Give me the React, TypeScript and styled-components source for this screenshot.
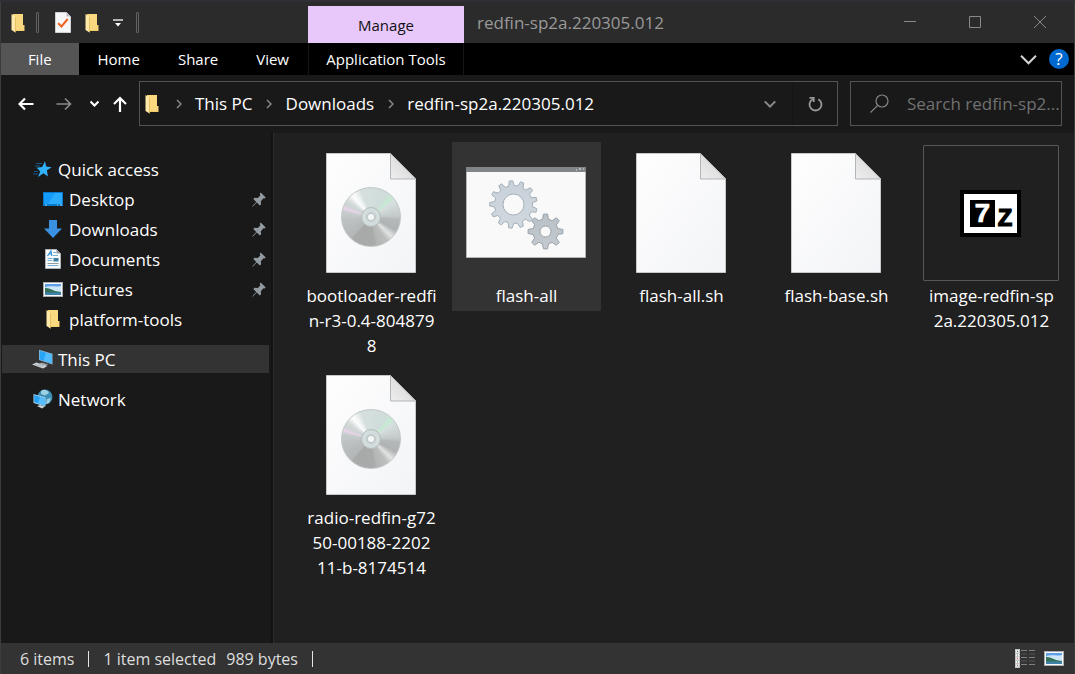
import React from 'react';
import styled, { createGlobalStyle } from 'styled-components';

const GlobalStyle = createGlobalStyle`
  *, *::before, *::after { box-sizing: border-box; }
  body {
    margin: 0;
    background: #191919;
    color: #fff;
    font-family: 'Open Sans', 'Noto Sans', sans-serif;
    font-size: 17px;
    line-height: 24px;
    font-variant-ligatures: none;
  }
  button, input { font: inherit; color: inherit; margin: 0; padding: 0; border: 0; background: none; }
  ul { list-style: none; margin: 0; padding: 0; }
  svg { display: block; flex: none; }
`;

const Window = styled.div`
  display: flex;
  flex-direction: column;
  min-height: 100vh;
  border: 1px solid #3d3d3f;
  border-top: 2px solid #2f2f35;
  border-bottom: 0;
`;

const TitleBar = styled.header`
  display: flex;
  height: 41px;
  padding-right: 2px;
  background: #2b2b2b;
`;

const QuickBar = styled.div`
  display: flex;
  align-items: center;
  width: 307px;
  padding-left: 10px;
`;

const QuickButton = styled.button<{ $width: number }>`
  display: flex;
  align-items: center;
  justify-content: center;
  width: ${(p) => p.$width}px;
  height: 24px;
`;

const Grip = styled.span<{ $before?: number; $after?: number }>`
  width: 3px;
  height: 21px;
  margin: 0 ${(p) => p.$after ?? 0}px 0 ${(p) => p.$before ?? 0}px;
  border: 1px solid #626262;
  border-radius: 1px;
`;

const ContextLabel = styled.div`
  display: flex;
  align-items: center;
  justify-content: center;
  width: 156px;
  margin-top: 4px;
  padding-top: 1px;
  background: #e8c8fa;
  color: #111;
  font-size: 15px;
`;

const WindowTitle = styled.h1`
  flex: 1;
  margin: 0;
  padding: 9px 0 0 13px;
  color: #999;
  font-size: 17px;
  font-weight: 400;
`;

const CaptionButton = styled.button`
  display: flex;
  align-items: center;
  justify-content: center;
  width: 65px;
  padding-bottom: 2px;
`;

const Ribbon = styled.nav`
  display: flex;
  height: 32px;
  background: #000;
`;

const RibbonTabs = styled.div`
  display: flex;
  width: 307px;
`;

const Tab = styled.button<{ $file?: boolean; $tool?: boolean }>`
  width: ${(p) => (p.$tool ? '156px' : p.$file ? '78px' : 'auto')};
  padding: 0 ${(p) => (p.$tool || p.$file ? 0 : 19)}px 1px;
  font-size: 15px;
  background: ${(p) => (p.$file ? '#555' : 'transparent')};
  border: solid #151515;
  border-width: ${(p) => (p.$tool ? '0 1px' : '0')};
`;

const RibbonEnd = styled.div`
  display: flex;
  align-items: center;
  gap: 12px;
  margin-left: auto;
  padding-right: 5px;
`;

const HelpButton = styled.button`
  width: 20px;
  height: 20px;
  border-radius: 50%;
  background: #0069cf;
  font-size: 17px;
  line-height: 20px;
`;

const NavBar = styled.div`
  display: flex;
  height: 58px;
  padding: 6px 12px 7px 10px;
  background: #191919;
`;

const NavButton = styled.button<{ $width: number }>`
  display: flex;
  align-items: center;
  justify-content: center;
  width: ${(p) => p.$width}px;
`;

const NavButtons = styled.div`
  display: flex;
  width: 128px;
`;

const AddressBar = styled.div`
  display: flex;
  flex: 1;
  align-items: center;
  border: 1px solid #535353;
  padding-left: 5px;
`;

const Crumbs = styled.div`
  display: flex;
  flex: 1;
  align-items: center;
  padding-left: 3px;
  white-space: nowrap;
`;

const Crumb = styled.button`
  height: 28px;
`;

const CrumbArrow = styled.span`
  display: flex;
  justify-content: center;
  width: 33px;
`;

const AddressButton = styled.button`
  display: flex;
  align-items: center;
  justify-content: center;
  align-self: stretch;
  width: 45px;
  border-left: 1px solid #151515;
`;

const SearchBox = styled.label`
  display: flex;
  align-items: center;
  gap: 18px;
  width: 212px;
  margin-left: 12px;
  padding-left: 19px;
  border: 1px solid #535353;
`;

const SearchInput = styled.input`
  min-width: 0;
  flex: 1;
  outline: 0;
  &::placeholder { color: #717171; opacity: 1; }
`;

const Body = styled.div`
  display: flex;
  flex: 1;
`;

const Sidebar = styled.nav`
  width: 270px;
  padding: 22px 2px 0 1px;
`;

const Splitter = styled.div`
  width: 3px;
  border-left: 2px solid #121212;
  border-right: 1px solid #2c2c2c;
`;

const Place = styled.li<{ $nested?: boolean; $active?: boolean; $spaced?: boolean }>`
  display: flex;
  align-items: center;
  height: 28px;
  margin: ${(p) => (p.$spaced ? 12 : 2)}px 0 0;
  padding: 0 3px 0 ${(p) => (p.$nested ? 40 : 30)}px;
  background: ${(p) => (p.$active ? '#333' : 'transparent')};
  &:first-child { margin-top: 0; }
`;

const PlaceIcon = styled.span<{ $nested?: boolean }>`
  display: flex;
  justify-content: center;
  width: 21px;
  margin-right: ${(p) => (p.$nested ? 6 : 5)}px;
`;

const PlaceLink = styled.a`
  flex: 1;
  padding-top: 2px;
  color: #fff;
  text-decoration: none;
`;

const Files = styled.ul`
  display: grid;
  flex: 1;
  grid-template-columns: repeat(auto-fill, 149px);
  align-content: start;
  align-items: start;
  gap: 3px 6px;
  padding: 9px 0 0 23px;
  background: #202020;
`;

const FileItem = styled.li<{ $selected?: boolean }>`
  display: flex;
  flex-direction: column;
  align-items: center;
  gap: 2px;
  padding: 3px 0;
  background: ${(p) => (p.$selected ? '#333' : 'transparent')};
`;

const Thumb = styled.div<{ $framed?: boolean }>`
  display: grid;
  place-items: center;
  width: 136px;
  height: 136px;
  margin-right: 2px;
  border: 1px solid ${(p) => (p.$framed ? '#575757' : 'transparent')};
  border-radius: 1px;
  & > * { grid-area: 1 / 1; }
`;

const FileName = styled.span`
  line-height: 25px;
  text-align: center;
`;

const NameLine = styled.span`
  display: block;
`;

const Disc = styled.div`
  display: grid;
  place-items: center;
  width: 60px;
  height: 60px;
  margin-top: 8px;
  border: 1px solid #c3c7c7;
  border-radius: 50%;
  background: conic-gradient(
    #d3dedd 0deg, #cfdcda 34deg, #c5ead2 47deg, #d6dfde 56deg, #c3caca 88deg,
    #b4b8b8 96deg, #b0b3b3 118deg, #e2e4e4 133deg, #bcbebe 146deg, #b3b5b5 168deg,
    #a9abab 172deg, #a8aaaa 220deg, #b4b7b7 224deg, #bdc1c1 262deg, #c5cccc 280deg,
    #e9d3e9 287deg, #cdd4d4 296deg, #d5dada 306deg, #fbfcfc 318deg, #f5f7f7 325deg, #d3dedd 340deg
  );
`;

const Hub = styled.div`
  display: grid;
  place-items: center;
  width: 20px;
  height: 20px;
  border: 1px solid #b3bbbb;
  border-radius: 50%;
  background: #d4dddd;
  &::after {
    content: '';
    width: 10px;
    height: 10px;
    border: 2px solid #c1cbcb;
    border-radius: 50%;
    background: #f6f8f8;
  }
`;

const StatusBar = styled.footer`
  display: flex;
  align-items: center;
  height: 31px;
  padding: 0 10px 0 19px;
  background: #333;
  color: #dedede;
  font-size: 16px;
`;

const StatusRule = styled.span`
  width: 1px;
  height: 16px;
  margin: 0 14px;
  background: #e5e5e5;
`;

const StatusText = styled.span<{ $gap?: boolean }>`
  margin-right: ${(p) => (p.$gap ? 10 : 0)}px;
`;

const Views = styled.div`
  display: flex;
  gap: 9px;
  margin-left: auto;
`;

const ViewButton = styled.button`
  display: flex;
  align-items: center;
`;

const FolderIcon = () => (
  <svg width="14" height="20" viewBox="0 0 14 20">
    <path d="M2 1h10v11h1.500v6H2z" fill="#f4cb69" />
    <path d="M3 1h9v11l1 1v4H4z" fill="#fad87f" />
    <path d="M.5 1l4 2.500V19.500l-4-2.500z" fill="#ffe9a8" />
    <path d="M4.500 4v15.500" stroke="#dfb04c" strokeWidth=".7" />
  </svg>
);

const TaskIcon = () => (
  <svg width="16" height="21" viewBox="0 0 16 21">
    <path d="M.5.5h11l4 4v16H.5z" fill="#f6f7f8" stroke="#cfd2d5" />
    <path d="M11.500.5v4h4z" fill="#b9bec3" />
    <path d="M3.200 11.200l3.300 3.300 6.200-7.500" fill="none" stroke="#ee6420" strokeWidth="2" />
  </svg>
);

const ArrowIcon = ({ dir, color }: { dir: 'left' | 'right' | 'up'; color: string }) => (
  <svg width="16" height="16" viewBox="0 0 16 16" fill="none" stroke={color} strokeWidth={dir === 'right' ? 1.700 : 2.200}>
    {dir === 'left' && <path d="M15.500 8H1.500M7 2.500L1.500 8l5.500 5.500" />}
    {dir === 'right' && <path d="M.5 8h14M9 2.500L14.500 8 9 13.500" />}
    {dir === 'up' && <path d="M8 16V2M2 8l6-6 6 6" />}
  </svg>
);

const Chevron = ({ size, color, stroke }: { size: number; color: string; stroke: number }) => (
  <svg width={size} height={size} viewBox="0 0 16 16" fill="none">
    <path d="M1 4.500l7 7 7-7" stroke={color} strokeWidth={(stroke * 16) / size} />
  </svg>
);

const CrumbChevron = () => (
  <svg width="6" height="10" viewBox="0 0 6 10" fill="none">
    <path d="M1 1l4 4-4 4" stroke="#888" strokeWidth="1.500" />
  </svg>
);

const StarIcon = () => (
  <svg width="19" height="17" viewBox="0 0 19 17">
    <path d="M3 2.500h6M2 5h5M0 13h5M1 10.500h4" stroke="#176aa0" strokeWidth=".8" />
    <path d="M12 .3l1.200 5.200 5.500.8-4.800 3 1 6.200-4.400-3.300L5 16l2.200-5.600-3.500-3.600 5.400-.8z" fill="#32b1fb" />
  </svg>
);

const DesktopIcon = () => (
  <svg width="20" height="14" viewBox="0 0 20 14">
    <path d="M0 0h20v14H0z" fill="#0779ca" />
    <path d="M1 1h18v11H1z" fill="#149cfb" />
    <path d="M12 1h7v11H5z" fill="#2aabff" />
    <path d="M2 13h2M14 13h1M17 13h2" stroke="#9ed5f7" />
  </svg>
);

const DownloadIcon = () => (
  <svg width="18" height="18" viewBox="0 0 18 18">
    <path d="M5 0h8v8.500h5L9 18 0 8.500h5z" fill="#3a91e2" />
  </svg>
);

const DocumentIcon = () => (
  <svg width="16" height="20" viewBox="0 0 16 20">
    <path d="M.5.5h11l4 4v15H.5z" fill="#f8f9fa" stroke="#aeb3b8" />
    <path d="M11.500.5v4h4z" fill="#8b949b" />
    <path d="M2.500 7L6 2l.8 5M3.600 5h3" fill="none" stroke="#2f8fd3" strokeWidth="1.200" />
    <path d="M8 3.500h3M8 6.500h5M2.500 9.500h5M2.500 11.500h5M2.500 16.500h11" stroke="#72aed6" />
    <path d="M8.500 9h5v3.500h-5z" fill="#3d7ea3" />
    <path d="M2.500 14.500h11" stroke="#8f9aa2" />
  </svg>
);

const PictureIcon = () => (
  <svg width="20" height="15" viewBox="0 0 20 15">
    <path d="M0 0h20v15H0z" fill="#a9adb0" />
    <path d="M1 1h18v13H1z" fill="#f7f9fa" />
    <path d="M2 2h16v11H2z" fill="#5f9fe8" />
    <path d="M2 5.500c5-2.500 10 0 16-1.500v6H2z" fill="#cfe6f6" />
    <path d="M2 6c4 0 7 1.500 10 3l6 1v1.500H2z" fill="#34705a" />
    <path d="M2 10.500h16V13H2z" fill="#3f82a9" />
  </svg>
);

const PcIcon = () => (
  <svg width="21" height="20" viewBox="0 0 21 20">
    <path d="M7 .8l13.500 4v10.700L7 11z" fill="#8fb9d4" />
    <path d="M7.700 1.800l12 3.700v9L7.700 10.400z" fill="#29a4f6" />
    <path d="M14 3.700l5.700 1.800v9l-8-2.700z" fill="#53bcff" />
    <path d="M9.500 13.500l7 2-3 1-6-1.700z" fill="#9da6ae" />
    <path d="M0 15.500l4.500-2 11 3.500-4.500 2.500z" fill="#ced4d8" />
    <path d="M3 15.300l8 2.400M6 14.500l6 2" stroke="#959da4" strokeWidth=".6" />
  </svg>
);

const NetworkIcon = () => (
  <svg width="20" height="20" viewBox="0 0 20 20">
    <circle cx="12" cy="8" r="7.500" fill="#3c8eb4" />
    <path d="M8 2c3-2.500 7-.5 8 2l-4 2.500-4-1.500zM14 10l4-1-2 5-3 1z" fill="#9ed0e4" />
    <path d="M.5 5l12 3.500v9L.5 14z" fill="#b5d7e9" />
    <path d="M1.200 6l10.600 3.200v7.300L1.200 13.300z" fill="#25a2f5" />
    <path d="M7 8l4.800 1.400v7.100L5 14.400z" fill="#59beff" />
    <path d="M4 17l3-1 5 1.500-3 2z" fill="#cbd2d7" />
  </svg>
);

const PinIcon = () => (
  <svg width="14" height="15" viewBox="0 0 14 15">
    <path d="M8.700.5l5 5-1.200 1-1-.2-2.700 2.900.3 3.100-1.300 1.200-3-3L.7 14.700l-.4-.4 4-4.300-3-3 1.200-1.300 3.300.4 2.500-2.700-.5-1.600z" fill="#929ba1" />
  </svg>
);

const PageIcon = () => (
  <svg width="90" height="120" viewBox="0 0 90 120">
    <defs>
      <linearGradient id="sheet" x1="0" y1="0" x2="1" y2="1">
        <stop offset="0" stopColor="#fefefe" />
        <stop offset="1" stopColor="#f3f4f7" />
      </linearGradient>
      <linearGradient id="fold" x1="0" y1="1" x2="1" y2="0">
        <stop offset="0" stopColor="#eeeeee" />
        <stop offset="1" stopColor="#d2d2d2" />
      </linearGradient>
    </defs>
    <path d="M.5.5h64l25 25v94H.5z" fill="url(#sheet)" stroke="#c6c8c9" />
    <path d="M64.500.5v25.500h25z" fill="url(#fold)" stroke="#b3b6b6" />
  </svg>
);

function gearPath(cx: number, cy: number, outer: number, root: number, hole: number, teeth: number, turn: number) {
  const step = (Math.PI * 2) / teeth;
  const point = (r: number, a: number) => `${(cx + r * Math.cos(a)).toFixed(2)} ${(cy + r * Math.sin(a)).toFixed(2)}`;
  const corners: string[] = [];
  for (let i = 0; i < teeth; i += 1) {
    const a = turn + i * step;
    corners.push(
      point(root, a - step * 0.3),
      point(outer, a - step * 0.15),
      point(outer, a + step * 0.15),
      point(root, a + step * 0.3),
    );
  }
  return `M${corners.join('L')}ZM${cx + hole} ${cy}a${hole} ${hole} 0 1 0 ${-2 * hole} 0a${hole} ${hole} 0 1 0 ${2 * hole} 0Z`;
}

const BatchIcon = () => (
  <svg width="120" height="92" viewBox="0 0 120 92">
    <defs>
      <linearGradient id="gearLarge" x1="0" y1="0" x2="0" y2="1">
        <stop offset="0" stopColor="#c8d1d9" />
        <stop offset="1" stopColor="#d0d7df" />
      </linearGradient>
      <linearGradient id="gearSmall" x1="0" y1="0" x2="0" y2="1">
        <stop offset="0" stopColor="#b9c1c6" />
        <stop offset="1" stopColor="#c4cacf" />
      </linearGradient>
    </defs>
    <path d="M.5.5h119v90H.5z" fill="#f9f9fa" stroke="#b4b6b7" />
    <path d="M0 0h120v5H0z" fill="#828587" />
    <path d="M110 3h1M113 2h2M117 2h1" stroke="#e8e8e8" />
    <path d={gearPath(47.5, 37.5, 23.8, 19, 10.5, 13, -1.68)} fill="url(#gearLarge)" fillRule="evenodd" stroke="#a6b0b7" strokeLinejoin="round" />
    <path d={gearPath(79.5, 64.5, 17.5, 12.7, 5.5, 8, -1.57)} fill="url(#gearSmall)" fillRule="evenodd" stroke="#99a3aa" strokeLinejoin="round" />
  </svg>
);

const SevenZipIcon = () => (
  <svg width="61" height="47" viewBox="0 0 61 47" fontFamily="'Liberation Mono', monospace" fontWeight="700">
    <path d="M0 0h61v47H0z" fill="#000" />
    <path d="M4 4h53v39H4z" fill="#fff" />
    <path d="M10 10h25v27H10z" fill="#000" />
    <text x="22.500" y="32" fontSize="28" textAnchor="middle" fill="#fff" stroke="#fff" strokeWidth=".6">7</text>
    <text x="45" y="36" fontSize="26" textAnchor="middle" fill="#000" stroke="#000">Z</text>
  </svg>
);

const DetailsIcon = () => (
  <svg width="20" height="19" viewBox="0 0 20 19">
    <path d="M0 0h5v19H0z" fill="#c4c4c4" />
    <path d="M1 1.500h3v2H1zM1 5h3v2H1zM1 8.500h3v2H1zM1 12h3v2H1zM1 15.500h3v2H1z" fill="#f5f5f5" />
    <path d="M2 2.500h1M2 6h1M2 13h1M2 16.500h1" stroke="#4d7d6a" />
    <path d="M2 9.500h1" stroke="#d43c2c" />
    <path d="M6 1.500h6M14 1.500h6M6 8.500h6M14 8.500h6M6 15.500h6M14 15.500h6" stroke="#808080" />
    <path d="M6 5h6M14 5h6M6 12h6M14 12h6" stroke="#555" />
  </svg>
);

type PlaceData = { name: string; icon: React.ReactNode; nested?: boolean; pinned?: boolean; active?: boolean; spaced?: boolean };

const places: PlaceData[] = [
  { name: 'Quick access', icon: <StarIcon /> },
  { name: 'Desktop', icon: <DesktopIcon />, nested: true, pinned: true },
  { name: 'Downloads', icon: <DownloadIcon />, nested: true, pinned: true },
  { name: 'Documents', icon: <DocumentIcon />, nested: true, pinned: true },
  { name: 'Pictures', icon: <PictureIcon />, nested: true, pinned: true },
  { name: 'platform-tools', icon: <FolderIcon />, nested: true },
  { name: 'This PC', icon: <PcIcon />, active: true, spaced: true },
  { name: 'Network', icon: <NetworkIcon />, spaced: true },
];

type FileData = { kind: 'disc' | 'page' | 'batch' | 'archive'; lines: string[]; selected?: boolean };

const files: FileData[] = [
  { kind: 'disc', lines: ['bootloader-redfi', 'n-r3-0.4-804879', '8'] },
  { kind: 'batch', lines: ['flash-all'], selected: true },
  { kind: 'page', lines: ['flash-all.sh'] },
  { kind: 'page', lines: ['flash-base.sh'] },
  { kind: 'archive', lines: ['image-redfin-sp', '2a.220305.012'] },
  { kind: 'disc', lines: ['radio-redfin-g72', '50-00188-2202', '11-b-8174514'] },
];

const crumbs = ['This PC', 'Downloads', 'redfin-sp2a.220305.012'];

export default function App() {
  return (
    <>
      <GlobalStyle />
      <Window>
        <TitleBar>
          <QuickBar>
            <FolderIcon />
            <Grip $before={11} $after={14} />
            <QuickButton $width={20} aria-label="Properties"><TaskIcon /></QuickButton>
            <QuickButton $width={38} aria-label="New folder"><FolderIcon /></QuickButton>
            <QuickButton $width={14} aria-label="Customize toolbar">
              <svg width="10" height="8" viewBox="0 0 10 8">
                <path d="M0 1h10" stroke="#fff" strokeWidth="1.300" />
                <path d="M2 4h6L5 7.500z" fill="#fff" />
              </svg>
            </QuickButton>
            <Grip $before={11} />
          </QuickBar>
          <ContextLabel>Manage</ContextLabel>
          <WindowTitle>redfin-sp2a.220305.012</WindowTitle>
          <CaptionButton aria-label="Minimize">
            <svg width="12" height="12" stroke="#898989"><path d="M0 5.500h12" /></svg>
          </CaptionButton>
          <CaptionButton aria-label="Maximize">
            <svg width="12" height="12" fill="none" stroke="#898989"><path d="M.5.5h11v11H.5z" /></svg>
          </CaptionButton>
          <CaptionButton aria-label="Close">
            <svg width="12" height="12" stroke="#898989"><path d="M0 0l12 12M12 0L0 12" /></svg>
          </CaptionButton>
        </TitleBar>

        <Ribbon>
          <RibbonTabs>
            <Tab $file>File</Tab>
            <Tab>Home</Tab>
            <Tab>Share</Tab>
            <Tab>View</Tab>
          </RibbonTabs>
          <Tab $tool>Application Tools</Tab>
          <RibbonEnd>
            <NavButton $width={17} aria-label="Expand ribbon"><Chevron size={17} color="#d5d5d5" stroke={2} /></NavButton>
            <HelpButton>?</HelpButton>
          </RibbonEnd>
        </Ribbon>

        <NavBar>
          <NavButtons>
            <NavButton $width={30} aria-label="Back"><ArrowIcon dir="left" color="#fff" /></NavButton>
            <NavButton $width={46} aria-label="Forward"><ArrowIcon dir="right" color="#8a8a8a" /></NavButton>
            <NavButton $width={14} aria-label="Recent locations"><Chevron size={9} color="#fff" stroke={2} /></NavButton>
            <NavButton $width={38} aria-label="Up"><ArrowIcon dir="up" color="#fff" /></NavButton>
          </NavButtons>
          <AddressBar>
            <FolderIcon />
            <Crumbs>
              {crumbs.map((name) => (
                <React.Fragment key={name}>
                  <CrumbArrow><CrumbChevron /></CrumbArrow>
                  <Crumb>{name}</Crumb>
                </React.Fragment>
              ))}
            </Crumbs>
            <NavButton $width={44} aria-label="Previous locations"><Chevron size={12} color="#8c8c8c" stroke={2} /></NavButton>
            <AddressButton aria-label="Refresh">
              <svg width="15" height="16" viewBox="0 0 15 16" fill="none" stroke="#9a9a9a" strokeWidth="1.800">
                <path d="M10.300 3.200a6 6 0 1 1-5.600 0" />
                <path d="M1.500 1.800h4.200v4.200" />
              </svg>
            </AddressButton>
          </AddressBar>
          <SearchBox>
            <svg width="19" height="19" viewBox="0 0 19 19" fill="none" stroke="#858585" strokeWidth="1.200">
              <circle cx="12" cy="7" r="6" />
              <path d="M7.700 11.300L.5 18.500" />
            </svg>
            <SearchInput type="text" aria-label="Search" placeholder="Search redfin-sp2..." />
          </SearchBox>
        </NavBar>

        <Body>
          <Sidebar>
            <ul>
              {places.map((p) => (
                <Place key={p.name} $nested={p.nested} $active={p.active} $spaced={p.spaced}>
                  <PlaceIcon $nested={p.nested}>{p.icon}</PlaceIcon>
                  <PlaceLink href="#">{p.name}</PlaceLink>
                  {p.pinned && <PinIcon />}
                </Place>
              ))}
            </ul>
          </Sidebar>
          <Splitter />
          <Files>
            {files.map((f) => (
              <FileItem key={f.lines[0]} $selected={f.selected}>
                <Thumb $framed={f.kind === 'archive'}>
                  {(f.kind === 'disc' || f.kind === 'page') && <PageIcon />}
                  {f.kind === 'disc' && <Disc><Hub /></Disc>}
                  {f.kind === 'batch' && <BatchIcon />}
                  {f.kind === 'archive' && <SevenZipIcon />}
                </Thumb>
                <FileName>
                  {f.lines.map((line) => <NameLine key={line}>{line}</NameLine>)}
                </FileName>
              </FileItem>
            ))}
          </Files>
        </Body>

        <StatusBar>
          <StatusText>6 items</StatusText>
          <StatusRule />
          <StatusText $gap>1 item selected</StatusText>
          <StatusText>989 bytes</StatusText>
          <StatusRule />
          <Views>
            <ViewButton aria-label="Details"><DetailsIcon /></ViewButton>
            <ViewButton aria-label="Large icons"><PictureIcon /></ViewButton>
          </Views>
        </StatusBar>
      </Window>
    </>
  );
}
